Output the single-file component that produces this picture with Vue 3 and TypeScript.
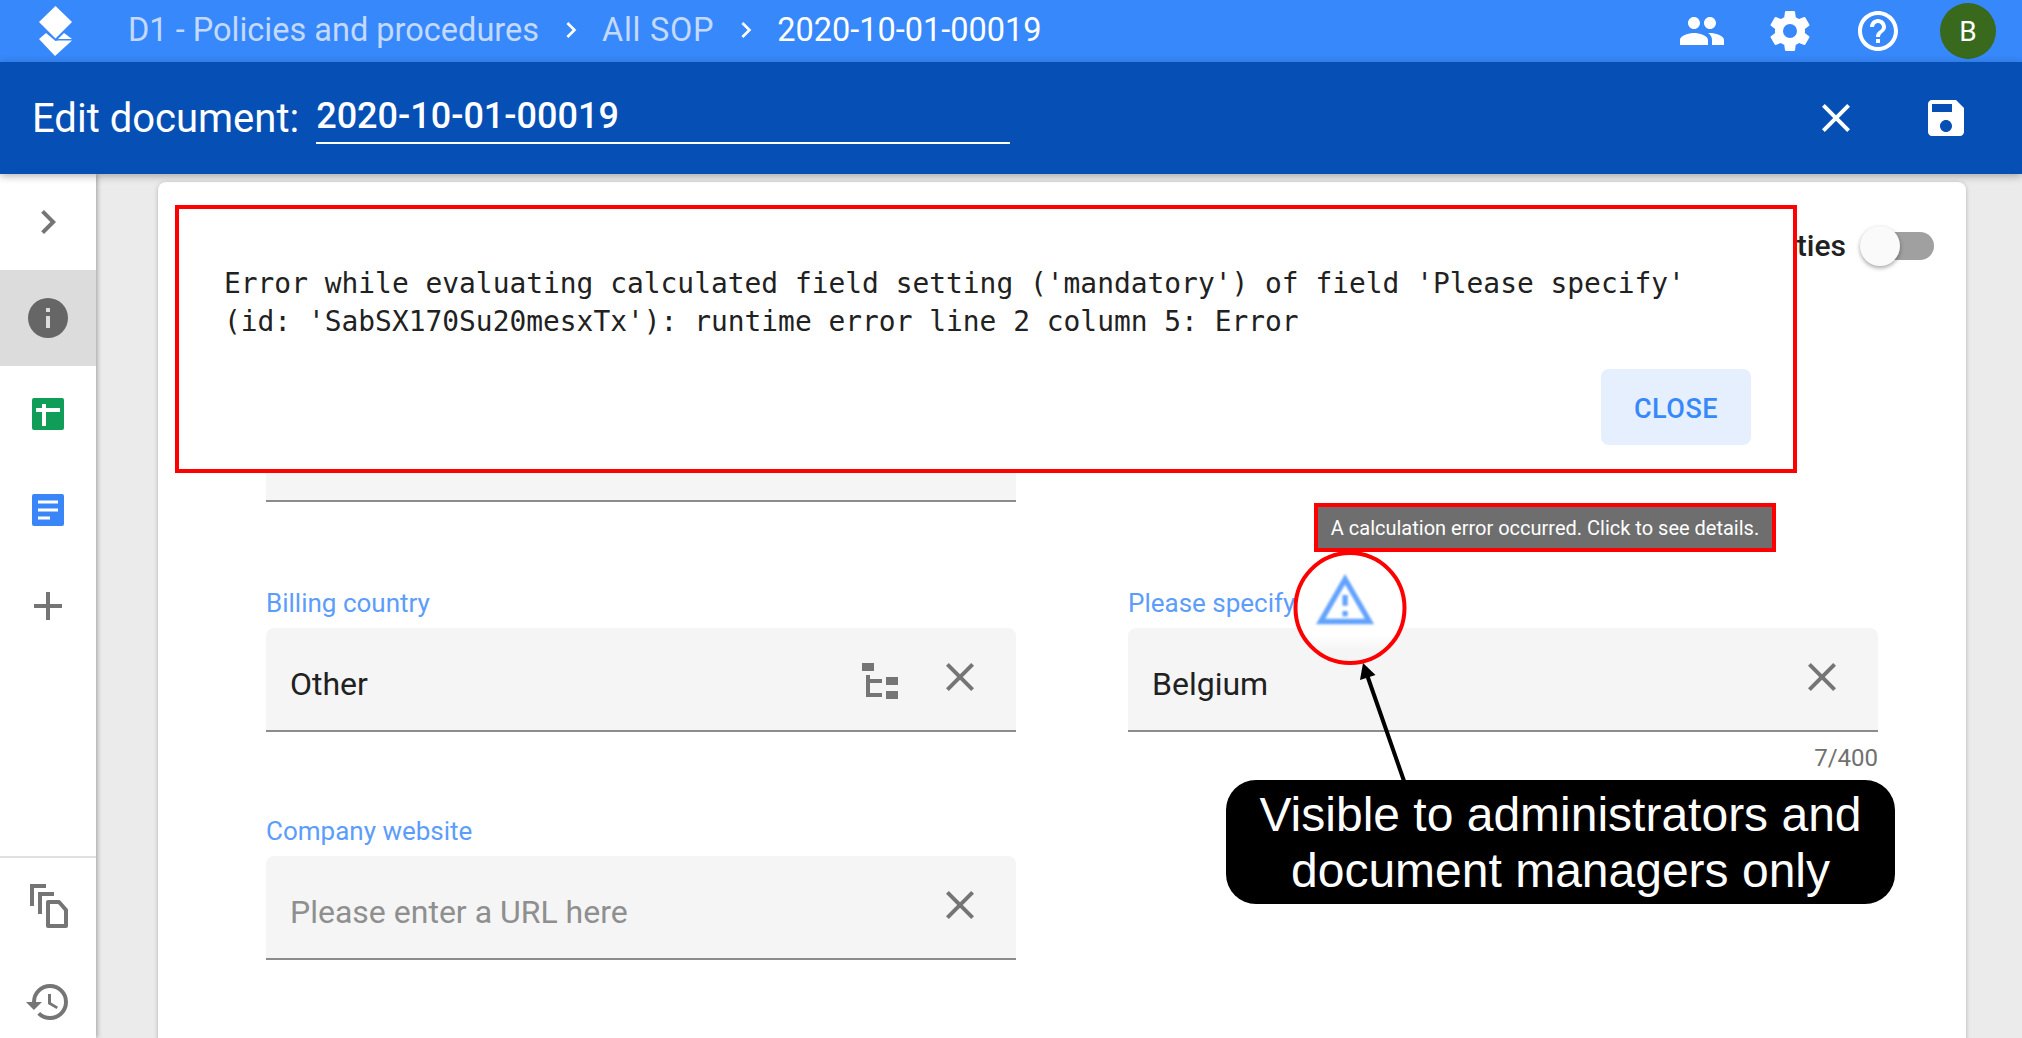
<script setup lang="ts">
interface Crumb { label: string; current?: boolean; wide?: boolean }
const crumbs: Crumb[] = [
  { label: 'D1 - Policies and procedures' },
  { label: 'All SOP', wide: true },
  { label: '2020-10-01-00019', current: true },
]
const closePath = 'M19,6.41L17.59,5L12,10.59L6.41,5L5,6.41L10.59,12L5,17.59L6.41,19L12,13.41L17.59,19L19,17.59L13.41,12L19,6.41Z'
</script>

<template>
  <div class="page">
    <header class="topbar">
      <svg class="logo" viewBox="0 0 34 50" width="34" height="50">
        <path d="M17.5 0L34 16L17.5 32.5L1 16Z" fill="#fff" />
        <path d="M1 33L8 27L17.5 35L20 34.5H34L17 50Z" fill="#fff" />
        <path d="M26 27L34 33H20Z" fill="#fff" />
      </svg>
      <nav class="crumbs">
        <template v-for="(c, i) in crumbs" :key="c.label">
          <svg v-if="i > 0" class="crumb-sep" viewBox="0 0 24 24" width="32" height="32">
            <path d="M8.59,16.58L13.17,12L8.59,7.41L10,6L16,12L10,18L8.59,16.58Z" fill="#fff" />
          </svg>
          <span class="crumb" :class="{ current: c.current, wide: c.wide }">{{ c.label }}</span>
        </template>
      </nav>
      <div class="top-actions">
        <svg viewBox="0 0 24 24" width="48" height="48"><path fill="#fff" d="M16 11c1.66 0 2.99-1.34 2.99-3S17.66 5 16 5c-1.66 0-3 1.34-3 3s1.34 3 3 3zm-8 0c1.66 0 2.99-1.34 2.99-3S9.66 5 8 5C6.34 5 5 6.34 5 8s1.34 3 3 3zm0 2c-2.33 0-7 1.17-7 3.5V19h14v-2.5c0-2.33-4.67-3.5-7-3.5zm8 0c-.29 0-.62.02-.97.05 1.16.84 1.97 1.97 1.97 3.45V19h6v-2.5c0-2.33-4.67-3.5-7-3.5z" /></svg>
        <svg viewBox="0 0 24 24" width="48" height="48"><path fill="#fff" d="M12,15.5A3.5,3.5 0 0,1 8.5,12A3.5,3.5 0 0,1 12,8.5A3.5,3.5 0 0,1 15.5,12A3.5,3.5 0 0,1 12,15.5M19.43,12.97C19.47,12.65 19.5,12.33 19.5,12C19.5,11.67 19.47,11.34 19.43,11L21.54,9.37C21.73,9.22 21.78,8.95 21.66,8.73L19.66,5.27C19.54,5.05 19.27,4.96 19.05,5.05L16.56,6.05C16.04,5.66 15.5,5.32 14.87,5.07L14.5,2.42C14.46,2.18 14.25,2 14,2H10C9.75,2 9.54,2.18 9.5,2.42L9.13,5.07C8.5,5.32 7.96,5.66 7.44,6.05L4.95,5.05C4.73,4.96 4.46,5.05 4.34,5.27L2.34,8.73C2.21,8.95 2.27,9.22 2.46,9.37L4.57,11C4.53,11.34 4.5,11.67 4.5,12C4.5,12.33 4.53,12.65 4.57,12.97L2.46,14.63C2.27,14.78 2.21,15.05 2.34,15.27L4.34,18.73C4.46,18.95 4.73,19.03 4.95,18.95L7.44,17.94C7.96,18.34 8.5,18.68 9.13,18.93L9.5,21.58C9.54,21.82 9.75,22 10,22H14C14.25,22 14.46,21.82 14.5,21.58L14.87,18.93C15.5,18.67 16.04,18.34 16.56,17.94L19.05,18.95C19.27,19.03 19.54,18.95 19.66,18.73L21.66,15.27C21.78,15.05 21.73,14.78 21.54,14.63L19.43,12.97Z" /></svg>
        <svg viewBox="0 0 24 24" width="48" height="48"><path fill="#fff" d="M11 18h2v-2h-2v2zm1-16C6.48 2 2 6.48 2 12s4.48 10 10 10 10-4.48 10-10S17.52 2 12 2zm0 18c-4.41 0-8-3.59-8-8s3.59-8 8-8 8 3.59 8 8-3.59 8-8 8zm0-14c-2.21 0-4 1.79-4 4h2c0-1.1.9-2 2-2s2 .9 2 2c0 2-3 1.75-3 5h2c0-2.25 3-2.5 3-5 0-2.21-1.79-4-4-4z" /></svg>
        <div class="avatar">B</div>
      </div>
    </header>

    <section class="editbar">
      <span class="edit-label">Edit document:</span>
      <span class="edit-input">2020-10-01-00019</span>
      <div class="edit-actions">
        <svg viewBox="0 0 24 24" width="48" height="48"><path fill="#fff" :d="closePath" /></svg>
        <svg viewBox="0 0 24 24" width="48" height="48"><path fill="#fff" d="M17 3H5c-1.11 0-2 .9-2 2v14c0 1.1.89 2 2 2h14c1.1 0 2-.9 2-2V7l-4-4zm-5 16c-1.66 0-3-1.34-3-3s1.34-3 3-3 3 1.34 3 3-1.34 3-3 3zm3-10H5V5h10v4z" /></svg>
      </div>
    </section>

    <div class="body">
      <aside class="sidebar">
        <div class="side-top">
          <div class="side-item">
            <svg viewBox="0 0 24 24" width="48" height="48"><path fill="#757575" d="M8.59,16.58L13.17,12L8.59,7.41L10,6L16,12L10,18L8.59,16.58Z" /></svg>
          </div>
          <div class="side-item active">
            <svg viewBox="0 0 24 24" width="48" height="48"><path fill="#666" d="M13,9H11V7H13M13,17H11V11H13M12,2A10,10 0 0,0 2,12A10,10 0 0,0 12,22A10,10 0 0,0 22,12A10,10 0 0,0 12,2Z" /></svg>
          </div>
          <div class="side-item">
            <svg viewBox="0 0 32 32" width="32" height="32">
              <rect width="32" height="32" rx="2" fill="#0f9d58" />
              <path d="M4 12H28M12 6V28" stroke="#fff" stroke-width="4" fill="none" />
            </svg>
          </div>
          <div class="side-item">
            <svg viewBox="0 0 32 32" width="32" height="32">
              <rect width="32" height="32" rx="2" fill="#3a86f9" />
              <path d="M6 8H26M6 16H26M6 24H18" stroke="#fff" stroke-width="3" fill="none" />
            </svg>
          </div>
          <div class="side-item">
            <svg viewBox="0 0 24 24" width="48" height="48"><path fill="#757575" d="M19,13H13V19H11V13H5V11H11V5H13V11H19V13Z" /></svg>
          </div>
        </div>
        <div class="side-bottom">
          <div class="side-item">
            <svg viewBox="0 0 48 48" width="48" height="48" fill="none" stroke="#757575" stroke-width="4">
              <path d="M8 24V4H22" />
              <path d="M16 32V12H30" />
              <path d="M24 20H35L42 28V44H24Z" stroke-linejoin="round" />
            </svg>
          </div>
          <div class="side-item">
            <svg viewBox="0 0 24 24" width="48" height="48"><path fill="#757575" d="M13.5,8H12V13L16.28,15.54L17,14.33L13.5,12.25V8M13,3A9,9 0 0,0 4,12H1L4.96,16.03L9,12H6A7,7 0 0,1 13,5A7,7 0 0,1 20,12A7,7 0 0,1 13,19C11.07,19 9.32,18.21 8.06,16.94L6.64,18.36C8.27,20 10.5,21 13,21A9,9 0 0,0 22,12A9,9 0 0,0 13,3" /></svg>
          </div>
        </div>
      </aside>

      <main class="content">
        <div class="card">
          <div class="toggle-row">
            <span class="toggle-text">Show empty properties</span>
            <span class="toggle"><span class="thumb"></span></span>
          </div>
          <div class="grid">
            <div class="field first">
              <div class="box"></div>
            </div>
            <div class="field first"></div>
            <div class="field">
              <label class="lbl">Billing country</label>
              <div class="box">
                <span class="val">Other</span>
                <svg class="tree" viewBox="0 0 36 36" width="36" height="36" fill="#757575">
                  <rect x="0" y="0" width="12" height="8" />
                  <path d="M4 12H8V16H20V20H8V30H20V34H4Z" />
                  <rect x="24" y="14" width="12" height="8" />
                  <rect x="24" y="28" width="12" height="8" />
                </svg>
                <svg class="clear" viewBox="0 0 24 24" width="48" height="48"><path fill="#757575" :d="closePath" /></svg>
              </div>
            </div>
            <div class="field">
              <label class="lbl">Please specify</label>
              <div class="box">
                <span class="val">Belgium</span>
                <svg class="clear" viewBox="0 0 24 24" width="48" height="48"><path fill="#757575" :d="closePath" /></svg>
              </div>
              <div class="counter">7/400</div>
            </div>
            <div class="field">
              <label class="lbl">Company website</label>
              <div class="box">
                <span class="val placeholder">Please enter a URL here</span>
                <svg class="clear" viewBox="0 0 24 24" width="48" height="48"><path fill="#757575" :d="closePath" /></svg>
              </div>
            </div>
          </div>
        </div>
      </main>
    </div>

    <!-- Overlays -->
    <div class="dialog">
      <p class="dialog-msg">Error while evaluating calculated field setting ('mandatory') of field 'Please specify' (id: 'SabSX170Su20mesxTx'): runtime error line 2 column 5: Error</p>
      <div class="dialog-actions"><button class="close-btn">CLOSE</button></div>
    </div>
    <div class="tooltip">A calculation error occurred. Click to see details.</div>
    <svg class="annot" width="2022" height="1038" viewBox="0 0 2022 1038">
      <defs>
        <linearGradient id="fade" x1="0" y1="0" x2="0" y2="1">
          <stop offset="0" stop-color="#fff" />
          <stop offset="0.7" stop-color="#fff" />
          <stop offset="1" stop-color="#fff" stop-opacity="0" />
        </linearGradient>
        <clipPath id="disc"><circle cx="1350" cy="608" r="54" /></clipPath>
      </defs>
      <rect x="1294" y="600" width="112" height="50" fill="url(#fade)" clip-path="url(#disc)" />
      <ellipse cx="1350" cy="608" rx="54.5" ry="55" fill="none" stroke="#f00" stroke-width="4" />
      <path class="warn" transform="translate(1313.4 568.7) scale(2.64)" fill="#62a2fd" d="M12,2L1,21H23M12,6L19.53,19H4.47M11,10V14H13V10M11,16V18H13V16" />
      <path d="M1404 781L1366 672" stroke="#000" stroke-width="4" fill="none" />
      <path d="M1363 663L1375.5 675L1360 680Z" fill="#000" />
    </svg>
    <div class="callout">Visible to administrators and<br />document managers only</div>
  </div>
</template>

<style>
html, body { margin: 0; overflow: hidden; background: #fff; }
</style>

<style scoped>
.page {
  position: relative;
  width: 2022px;
  height: 1038px;
  overflow: hidden;
  display: flex;
  flex-direction: column;
  font-family: Roboto, "Liberation Sans", sans-serif;
  color: #212121;
}
.topbar {
  height: 62px;
  flex: none;
  background: #3788fb;
  display: flex;
  align-items: center;
  padding: 0 26px 0 38px;
}
.logo { flex: none; }
.crumbs {
  margin-left: 56px;
  margin-top: -2px;
  display: flex;
  align-items: center;
  font-size: 32.5px;
  color: #c3d9fd;
}
.crumb-sep { margin: 0 15.5px; }
.crumb.wide { letter-spacing: 0.7px; }
.crumb.current { color: #fff; }
.top-actions {
  margin-left: auto;
  display: flex;
  align-items: center;
  gap: 40px;
}
.avatar {
  width: 56px;
  height: 56px;
  margin-left: -2px;
  border-radius: 50%;
  background: #38691c;
  color: #fff;
  font-size: 28px;
  display: flex;
  align-items: center;
  justify-content: center;
}
.editbar {
  position: relative;
  z-index: 3;
  height: 112px;
  flex: none;
  background: #054fb5;
  color: #fff;
  display: flex;
  align-items: center;
  padding: 0 52px 0 32px;
  box-shadow: 0 2px 8px rgba(0, 0, 0, 0.3);
}
.edit-label { font-size: 40px; }
.edit-input {
  margin-left: 17px;
  width: 694px;
  height: 49px;
  font-size: 36px;
  line-height: 46px;
  font-weight: 500;
  border-bottom: 2px solid #fff;
}
.edit-actions {
  margin-left: auto;
  display: flex;
  align-items: center;
  gap: 62px;
}
.body {
  flex: 1;
  min-height: 0;
  display: flex;
  background: #ebebeb;
}
.sidebar {
  width: 96px;
  flex: none;
  background: #fff;
  display: flex;
  flex-direction: column;
  justify-content: space-between;
  box-shadow: 1px 0 5px rgba(0, 0, 0, 0.35);
  position: relative;
  z-index: 1;
}
.side-item {
  height: 96px;
  display: flex;
  align-items: center;
  justify-content: center;
}
.side-item.active { background: #dcdcdc; }
.side-bottom {
  border-top: 2px solid #e0e0e0;
  margin-bottom: -12px;
  margin-top: -2px;
}
.content {
  flex: 1;
  min-width: 0;
  padding: 8px 56px 0 62px;
}
.card {
  position: relative;
  height: 1000px;
  background: #fff;
  border-radius: 8px;
  box-shadow: 0 1px 4px rgba(0, 0, 0, 0.25);
  padding: 0 88px 0 108px;
}
.toggle-row {
  position: absolute;
  top: 46px;
  right: 32px;
  display: flex;
  align-items: center;
  gap: 16px;
}
.toggle-text { font-size: 30px; font-weight: 500; }
.toggle {
  position: relative;
  display: block;
  width: 72px;
  height: 28px;
  border-radius: 14px;
  background: #a0a0a0;
}
.thumb {
  position: absolute;
  left: -2px;
  top: -6px;
  width: 40px;
  height: 40px;
  border-radius: 50%;
  background: #fafafa;
  box-shadow: 0 2px 4px rgba(0, 0, 0, 0.35);
}
.grid {
  padding-top: 220px;
  display: grid;
  grid-template-columns: 750px 750px;
  column-gap: 112px;
  align-content: start;
}
.field { position: relative; height: 228px; }
.field.first { height: 193px; }
.field.first .box { height: 100px; }
.lbl {
  display: block;
  height: 32px;
  font-size: 26px;
  line-height: 32px;
  color: #5c9dfc;
  margin-top: -8px;
  margin-bottom: 9px;
}
.box {
  height: 104px;
  box-sizing: border-box;
  background: #f5f5f5;
  border-bottom: 2px solid #8c8c8c;
  border-radius: 8px 8px 0 0;
  display: flex;
  align-items: center;
  padding: 0 32px 0 24px;
}
.val { flex: 1; font-size: 32px; padding-top: 9px; }
.placeholder { color: #8f8f8f; }
.tree { margin-right: 38px; margin-top: 4px; }
.clear { margin-top: -4px; }
.counter {
  text-align: right;
  font-size: 24px;
  color: #707070;
  margin-top: 12px;
}
.dialog {
  position: absolute;
  left: 175px;
  top: 205px;
  width: 1622px;
  height: 268px;
  box-sizing: border-box;
  border: 4px solid #f00;
  background: #fff;
  z-index: 5;
  padding: 56px 42px 0 45px;
}
.dialog-msg {
  margin: 0;
  font-family: "DejaVu Sans Mono", "Liberation Mono", monospace;
  font-size: 27.9px;
  line-height: 38px;
  color: #212121;
  height: 104px;
}
.dialog-actions { display: flex; justify-content: flex-end; }
.close-btn {
  width: 150px;
  height: 76px;
  border: 0;
  border-radius: 8px;
  background: #e6effe;
  color: #3788fb;
  font-family: Roboto, sans-serif;
  font-size: 27px;
  font-weight: 500;
  letter-spacing: 0.5px;
  padding: 3px 0 0;
}
.tooltip {
  position: absolute;
  left: 1314px;
  top: 503px;
  width: 462px;
  height: 49px;
  box-sizing: border-box;
  border: 4px solid #f00;
  background: #6e6e6e;
  color: #fff;
  font-size: 20px;
  display: flex;
  align-items: center;
  justify-content: center;
  z-index: 6;
}
.annot {
  position: absolute;
  left: 0;
  top: 0;
  z-index: 6;
  pointer-events: none;
}
.warn { filter: blur(0.5px); }
.callout {
  position: absolute;
  left: 1226px;
  top: 780px;
  width: 669px;
  height: 124px;
  box-sizing: border-box;
  border-radius: 30px;
  background: #000;
  color: #fff;
  font-family: "Liberation Sans", Arial, sans-serif;
  font-size: 48px;
  line-height: 56px;
  text-align: center;
  padding-top: 7px;
  z-index: 7;
}
</style>
